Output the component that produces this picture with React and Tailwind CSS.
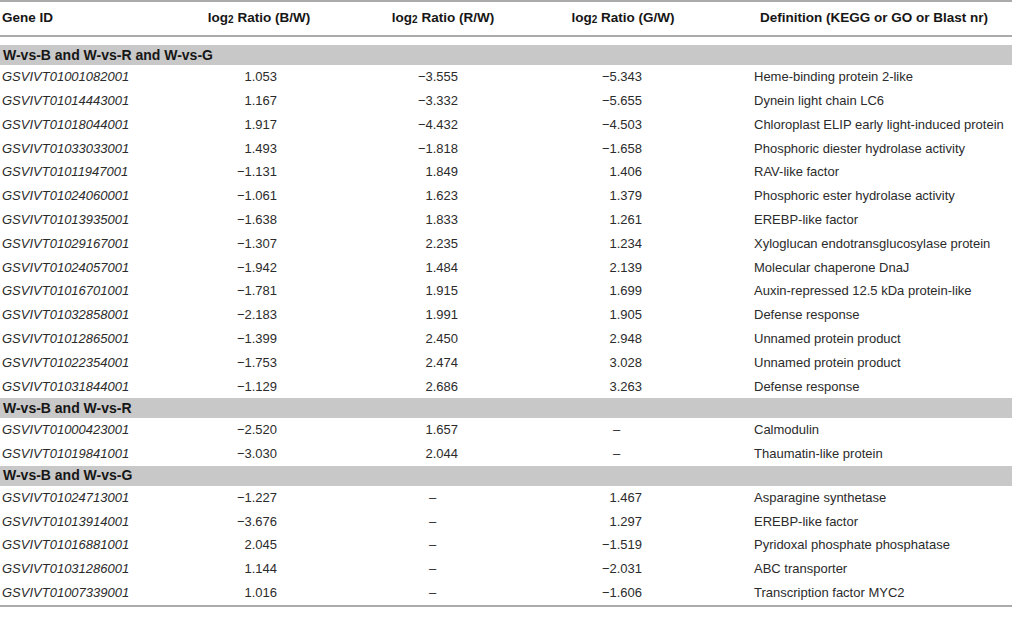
import React from "react";

const groups = [
  {
    title: "W-vs-B and W-vs-R and W-vs-G",
    rows: [
      ["GSVIVT01001082001", "1.053", "\u22123.555", "\u22125.343", "Heme-binding protein 2-like"],
      ["GSVIVT01014443001", "1.167", "\u22123.332", "\u22125.655", "Dynein light chain LC6"],
      ["GSVIVT01018044001", "1.917", "\u22124.432", "\u22124.503", "Chloroplast ELIP early light-induced protein"],
      ["GSVIVT01033033001", "1.493", "\u22121.818", "\u22121.658", "Phosphoric diester hydrolase activity"],
      ["GSVIVT01011947001", "\u22121.131", "1.849", "1.406", "RAV-like factor"],
      ["GSVIVT01024060001", "\u22121.061", "1.623", "1.379", "Phosphoric ester hydrolase activity"],
      ["GSVIVT01013935001", "\u22121.638", "1.833", "1.261", "EREBP-like factor"],
      ["GSVIVT01029167001", "\u22121.307", "2.235", "1.234", "Xyloglucan endotransglucosylase protein"],
      ["GSVIVT01024057001", "\u22121.942", "1.484", "2.139", "Molecular chaperone DnaJ"],
      ["GSVIVT01016701001", "\u22121.781", "1.915", "1.699", "Auxin-repressed 12.5 kDa protein-like"],
      ["GSVIVT01032858001", "\u22122.183", "1.991", "1.905", "Defense response"],
      ["GSVIVT01012865001", "\u22121.399", "2.450", "2.948", "Unnamed protein product"],
      ["GSVIVT01022354001", "\u22121.753", "2.474", "3.028", "Unnamed protein product"],
      ["GSVIVT01031844001", "\u22121.129", "2.686", "3.263", "Defense response"],
    ],
  },
  {
    title: "W-vs-B and W-vs-R",
    rows: [
      ["GSVIVT01000423001", "\u22122.520", "1.657", null, "Calmodulin"],
      ["GSVIVT01019841001", "\u22123.030", "2.044", null, "Thaumatin-like protein"],
    ],
  },
  {
    title: "W-vs-B and W-vs-G",
    rows: [
      ["GSVIVT01024713001", "\u22121.227", null, "1.467", "Asparagine synthetase"],
      ["GSVIVT01013914001", "\u22123.676", null, "1.297", "EREBP-like factor"],
      ["GSVIVT01016881001", "2.045", null, "\u22121.519", "Pyridoxal phosphate phosphatase"],
      ["GSVIVT01031286001", "1.144", null, "\u22122.031", "ABC transporter"],
      ["GSVIVT01007339001", "1.016", null, "\u22121.606", "Transcription factor MYC2"],
    ],
  },
];

// value cell: right aligned, a dash sits where the decimal point would be
function Num({ value }) {
  if (value === null) {
    return (
      <span>
        {"\u2013"}
        <span className="invisible">000</span>
      </span>
    );
  }
  return <span>{value}</span>;
}

function LogHead({ label }) {
  return (
    <span>
      log<sub className="text-[10px] relative top-[1px]">2</sub> Ratio ({label})
    </span>
  );
}

const cols = "grid grid-cols-[180px_158px_210px_150px_1fr]";

export default function App() {
  return (
    <div className="w-[1012px] h-[617px] bg-white font-['Liberation_Sans',Arial,sans-serif] text-[#2b2b2b]">
      <div className="border-t-2 border-[#ababab]" />

      {/* Header */}
      <div className={`${cols} h-[35px] items-center font-bold text-[13.5px] text-[#161616] border-b-2 border-[#ababab]`}>
        <div className="pl-[2px]">Gene ID</div>
        <div className="text-center">
          <LogHead label="B/W" />
        </div>
        <div className="text-center">
          <LogHead label="R/W" />
        </div>
        <div className="text-center">
          <LogHead label="G/W" />
        </div>
        <div className="pl-[62px] whitespace-nowrap">Definition (KEGG or GO or Blast nr)</div>
      </div>

      <div className="h-[8px]" />

      {groups.map((g) => (
        <div key={g.title}>
          <div className="h-[20px] flex items-center bg-[#c8c8c8] pl-[3px] font-bold text-[14px] text-[#161616]">
            {g.title}
          </div>
          {g.rows.map((r) => (
            <div key={r[0]} className={`${cols} h-[23.8px] items-center text-[13px]`}>
              <div className="pl-[2px] italic">{r[0]}</div>
              <div className="text-right pr-[61px]">
                <Num value={r[1]} />
              </div>
              <div className="text-right pr-[90px]">
                <Num value={r[2]} />
              </div>
              <div className="text-right pr-[56px]">
                <Num value={r[3]} />
              </div>
              <div className="pl-[56px] whitespace-nowrap">{r[4]}</div>
            </div>
          ))}
        </div>
      ))}

      <div className="border-t-2 border-[#ababab]" />
    </div>
  );
}
